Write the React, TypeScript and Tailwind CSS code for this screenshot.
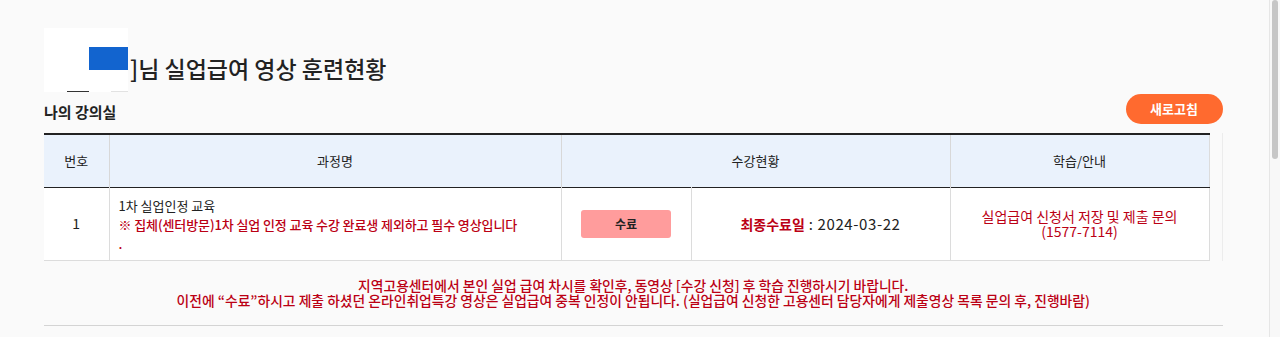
import React from 'react';

const font = { fontFamily: '"Noto Sans CJK KR", "Noto Sans", sans-serif' };

export default function App() {
  return (
    <div className="flex min-h-screen bg-[#fafafa] text-[#222]" style={font}>
      <main className="flex-1 pl-[44px] pr-[46px] pt-[28px]">
        {/* Title */}
        <div className="flex items-start h-[64px]">
          <div className="relative w-[84px] h-[64px] bg-white">
            <div className="absolute left-[45px] top-[19px] w-[39px] h-[23px] bg-[#1264cf]" />
            <div className="absolute left-[23px] bottom-0 w-[22px] h-px bg-[#333]" />
            <div className="absolute left-[67px] bottom-0 w-[17px] h-px bg-[#e2e2e2]" />
          </div>
          <h1 className="mt-[25px] ml-[2px] text-[23px] leading-[30px] font-medium text-[#222]">
            ]님 실업급여 영상 훈련현황
          </h1>
        </div>

        {/* Section header */}
        <div className="flex items-center justify-between mt-[2px] h-[30px]">
          <h2 className="mt-[6px] text-[15px] font-bold leading-[20px]">나의 강의실</h2>
          <button className="w-[97px] h-[30px] rounded-full bg-[#ff6a2f] text-white text-[13px] font-semibold">
            새로고침
          </button>
        </div>

        {/* Table */}
        <div className="flex mt-[9px]">
          <table className="w-[1165px] table-fixed border-collapse border-r border-[#dcdcdc]">
            <colgroup>
              <col className="w-[65px]" />
              <col className="w-[452px]" />
              <col className="w-[130px]" />
              <col className="w-[259px]" />
              <col className="w-[259px]" />
            </colgroup>
            <thead>
              <tr className="h-[53px] bg-[#eaf2fc] border-t-2 border-b border-t-[#222] border-b-[#222] text-[13px]">
                <th className="font-normal border-r border-[#d8d8d8]">번호</th>
                <th className="font-normal border-r border-[#d8d8d8]">과정명</th>
                <th colSpan={2} className="font-normal border-r border-[#d8d8d8]">수강현황</th>
                <th className="font-normal">학습/안내</th>
              </tr>
            </thead>
            <tbody>
              <tr className="h-[73px] bg-white border-b border-[#dcdcdc]">
                <td className="text-center text-[14px] border-r border-[#dcdcdc]">1</td>
                <td className="pl-[9px] pt-[2px] text-[13px] leading-[19px] border-r border-[#dcdcdc]">
                  <div>1차 실업인정 교육</div>
                  <div className="text-[#bb0014] font-medium tracking-[-0.1px]">
                    ※ 집체(센터방문)1차 실업 인정 교육 수강 완료생 제외하고 필수 영상입니다
                  </div>
                  <div className="text-[#bb0014] font-medium">.</div>
                </td>
                <td className="border-r border-[#dcdcdc]">
                  <div className="mx-auto w-[90px] h-[28px] rounded-[3px] bg-[#ff9c9c] flex items-center justify-center text-[12px] font-bold text-[#222]">
                    수료
                  </div>
                </td>
                <td className="text-center border-r border-[#dcdcdc]">
                  <span className="text-[14px] text-[#bb0014] font-bold">최종수료일</span>
                  <span className="text-[15px] tracking-[0.6px]"> : 2024-03-22</span>
                </td>
                <td className="text-center text-[14px] leading-[15px] text-[#bb0014]">
                  <div>실업급여 신청서 저장 및 제출 문의</div>
                  <div>(1577-7114)</div>
                </td>
              </tr>
            </tbody>
          </table>
          <div className="w-[13px] border-r border-[#ececec]" />
        </div>

        {/* Notice */}
        <div className="flex flex-col items-center justify-center h-[65px] border-b border-[#d4d4d4] text-[13.8px] leading-[15px] font-medium text-[#bb0014]">
          <p>지역고용센터에서 본인 실업 급여 차시를 확인후, 동영상 [수강 신청] 후 학습 진행하시기 바랍니다.</p>
          <p>
            이전에 “수료”하시고 제출 하셨던 온라인취업특강 영상은 실업급여 중복 인정이 안됩니다. (실업급여 신청한 고용센터 담당자에게 제출영상 목록 문의 후, 진행바람)
          </p>
        </div>
      </main>

      {/* Scrollbar */}
      <div className="w-[12px] border-l border-[#e6e6e6] bg-[#f8f8f8] flex justify-center">
        <div className="w-[6px] h-[159px] rounded-full bg-[#c6c6c6]" />
      </div>
    </div>
  );
}
